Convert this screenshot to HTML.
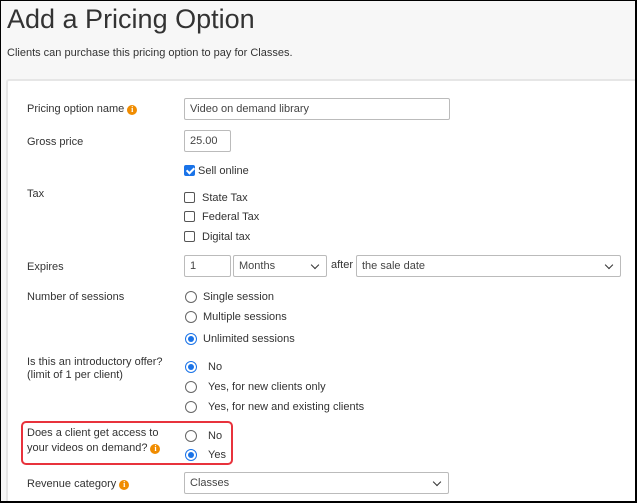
<!DOCTYPE html>
<html style="width:637px;height:503px;overflow:hidden"><head><style>
*{box-sizing:border-box;margin:0;padding:0}
body{width:637px;height:503px;overflow:hidden;background:#f7f7f7;font-family:"Liberation Sans",sans-serif;color:#333;position:relative}
#frame{position:absolute;left:0;top:0;width:637px;height:503px;border:1px solid #000;border-right-width:2px;border-bottom-width:2px;z-index:9;pointer-events:none}
h1{position:absolute;left:7px;top:4px;font-size:27px;font-weight:normal;color:#333}
.sub{position:absolute;left:7px;top:47px;font-size:11px;color:#333}
#panel{position:absolute;left:6px;top:79px;width:640px;height:440px;background:#fff;border:2px solid #e6e6e6;border-radius:3px}
.a{position:absolute;font-size:11px;color:#333;white-space:nowrap;line-height:13px}
.in{position:absolute;border:1px solid #bbb;background:#fff;font-size:11px;padding-left:5px;line-height:20px;height:22px;border-radius:2px;color:#444}
.sel::after{content:"";position:absolute;right:8px;top:6px;width:5px;height:5px;border-right:1.6px solid #333;border-bottom:1.6px solid #333;transform:rotate(45deg)}
.cb{position:absolute;width:11px;height:11px;border:1px solid #555;border-radius:2px;background:#fff}
.cb.on{background:#1a73e8;border-color:#1a73e8}
.cb.on::after{content:"";position:absolute;left:3px;top:0px;width:3px;height:6px;border-right:2px solid #fff;border-bottom:2px solid #fff;transform:rotate(45deg)}
.r{position:absolute;width:12px;height:12px;border:1px solid #666;border-radius:50%;background:#fff}
.r.on{border:1.5px solid #1a73e8}
.r.on::after{content:"";position:absolute;left:1.5px;top:1.5px;width:6px;height:6px;border-radius:50%;background:#1a73e8}
.i{display:inline-block;width:10px;height:10px;border-radius:50%;background:#f08c00;color:#fff;font-size:8px;font-weight:bold;text-align:center;line-height:10px;vertical-align:0px;margin-left:3px;font-family:"Liberation Serif",serif}
#hl{position:absolute;left:21px;top:421px;width:212px;height:44px;border:2px solid #e8323c;border-radius:5px}
</style></head><body>
<h1>Add a Pricing Option</h1>
<div class="sub">Clients can purchase this pricing option to pay for Classes.</div>
<div id="panel"></div>
<div class="a" style="left:27px;top:103px">Pricing option name<span class="i">i</span></div>
<div class="in" style="left:184px;top:98px;width:266px">Video on demand library</div>
<div class="a" style="left:27px;top:136px">Gross price</div>
<div class="in" style="left:184px;top:130px;width:47px">25.00</div>
<div class="cb on" style="left:184px;top:165px"></div><div class="a" style="left:198px;top:165px">Sell online</div>
<div class="a" style="left:27px;top:188px">Tax</div>
<div class="cb" style="left:184px;top:192px"></div><div class="a" style="left:202px;top:192px">State Tax</div>
<div class="cb" style="left:184px;top:211px"></div><div class="a" style="left:202px;top:211px">Federal Tax</div>
<div class="cb" style="left:184px;top:231px"></div><div class="a" style="left:202px;top:231px">Digital tax</div>
<div class="a" style="left:27px;top:261px">Expires</div>
<div class="in" style="left:184px;top:255px;width:47px">1</div>
<div class="in sel" style="left:233px;top:255px;width:94px">Months</div>
<div class="a" style="left:331px;top:259px">after</div>
<div class="in sel" style="left:356px;top:255px;width:265px">the sale date</div>
<div class="a" style="left:27px;top:291px">Number of sessions</div>
<div class="r" style="left:185px;top:291px"></div><div class="a" style="left:203px;top:291px">Single session</div>
<div class="r" style="left:185px;top:311px"></div><div class="a" style="left:203px;top:311px">Multiple sessions</div>
<div class="r on" style="left:185px;top:333px"></div><div class="a" style="left:203px;top:333px">Unlimited sessions</div>
<div class="a" style="left:27px;top:356px">Is this an introductory offer?<br>(limit of 1 per client)</div>
<div class="r on" style="left:185px;top:361px"></div><div class="a" style="left:208px;top:361px">No</div>
<div class="r" style="left:185px;top:381px"></div><div class="a" style="left:208px;top:381px">Yes, for new clients only</div>
<div class="r" style="left:185px;top:401px"></div><div class="a" style="left:208px;top:401px">Yes, for new and existing clients</div>
<div id="hl"></div>
<div class="a" style="left:27px;top:426px;line-height:15px">Does a client get access to<br>your videos on demand?<span class="i">i</span></div>
<div class="r" style="left:185px;top:430px"></div><div class="a" style="left:208px;top:430px">No</div>
<div class="r on" style="left:185px;top:449px"></div><div class="a" style="left:208px;top:449px">Yes</div>
<div class="a" style="left:27px;top:478px">Revenue category<span class="i">i</span></div>
<div class="in sel" style="left:184px;top:472px;width:265px">Classes</div>
<div id="frame"></div>
</body></html>
